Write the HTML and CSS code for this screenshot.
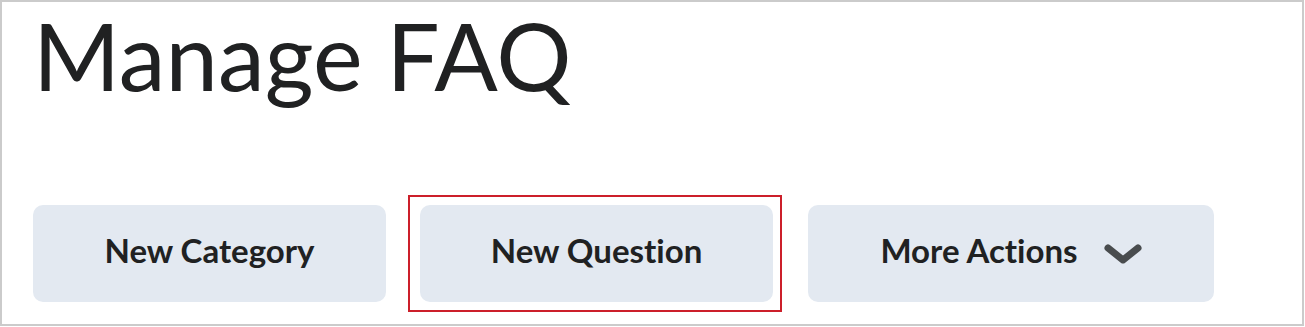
FILE: index.html
```html
<!DOCTYPE html>
<html lang="en">
<head>
    <meta charset="UTF-8">
    <title>Manage FAQ</title>
    <link rel="stylesheet" href="styles.css">
</head>
<body>
    <div class="frame">
        <h1 class="title">Manage FAQ</h1>
        <div class="actions">
            <button class="btn">New Category</button>
            <button class="btn btn-marked">New Question</button>
            <button class="btn btn-wide">More Actions
                <svg class="chevron" width="38" height="20" viewBox="0 0 38 20">
                    <polyline points="4,4 19,16 34,4" fill="none" stroke="#494c4e" stroke-width="7" stroke-linecap="round" stroke-linejoin="round"/>
                </svg>
            </button>
        </div>
    </div>
</body>
</html>
```

FILE: styles.css
```css
    body {
        margin: 0;
        padding: 0;
        background-color: white;
        font-family: Lato, "Liberation Sans", sans-serif;
        font-variant-ligatures: no-common-ligatures;
        color: #202122;
    }
    .frame {
        width: 1304px;
        height: 326px;
        box-sizing: border-box;
        border: 2px solid #cbcbcb;
        padding: 6px 0 0 31px;
    }
    .title {
        margin: 0;
        font-size: 94px;
        font-weight: 400;
        line-height: 1;
    }
    .actions {
        display: flex;
        gap: 34px;
        margin-top: 103px;
    }
    .btn {
        position: relative;
        font-family: Lato, "Liberation Sans", sans-serif;
        font-variant-ligatures: no-common-ligatures;
        font-size: 33px;
        font-weight: 700;
        line-height: 1;
        color: #202122;
        background-color: #e3e9f1;
        border: none;
        border-radius: 10px;
        width: 353px;
        height: 97px;
        padding: 0 0 6px 0;
        display: flex;
        align-items: center;
        justify-content: center;
        gap: 26px;
        cursor: pointer;
    }
    .btn-wide {
        width: 406px;
        margin-left: 1px;
    }
    .btn-marked::after {
        content: "";
        position: absolute;
        top: -10px;
        bottom: -10px;
        left: -12px;
        right: -9px;
        border: 2px solid #cc1f2a;
    }
    .chevron {
        display: block;
        margin-top: 6px;
    }
```
